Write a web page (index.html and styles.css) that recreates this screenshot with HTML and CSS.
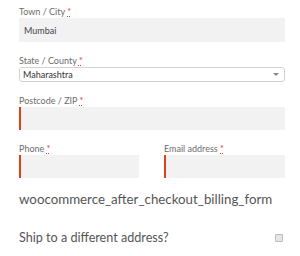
FILE: index.html
```html
<!DOCTYPE html>
<html lang="en">

<head>
    <meta charset="UTF-8">
    <meta name="viewport" content="width=device-width, initial-scale=1.0">
    <title>Billing Details</title>
    <link rel="stylesheet" href="styles.css">
</head>

<body>
    <form class="billing-form">
        <div class="form-row">
            <label for="city">Town / City <abbr class="required">*</abbr></label>
            <input type="text" id="city" value="Mumbai">
        </div>
        <div class="form-row">
            <label for="state">State / County <abbr class="required">*</abbr></label>
            <div class="select-box" id="state">
                <span>Maharashtra</span>
                <span class="arrow"></span>
            </div>
        </div>
        <div class="form-row">
            <label for="postcode">Postcode / ZIP <abbr class="required">*</abbr></label>
            <input type="text" id="postcode" class="invalid">
        </div>
        <div class="form-row half-row">
            <div class="half">
                <label for="phone">Phone <abbr class="required">*</abbr></label>
                <input type="text" id="phone" class="invalid">
            </div>
            <div class="half">
                <label for="email">Email address <abbr class="required">*</abbr></label>
                <input type="text" id="email" class="invalid">
            </div>
        </div>
        <p class="hook">woocommerce_after_checkout_billing_form</p>
        <div class="ship-row">
            <span>Ship to a different address?</span>
            <span class="checkbox"></span>
        </div>
    </form>
</body>

</html>
```

FILE: styles.css
```css
body {
    font-family: Lato, "Open Sans", sans-serif;
    margin: 0;
    padding: 5px 15px 0 19px;
    background-color: #fff;
    color: #515151;
}

.billing-form {
    display: flex;
    flex-direction: column;
    width: 266px;
}

.form-row {
    display: flex;
    flex-direction: column;
    margin-bottom: 12px;
}

.form-row label {
    display: block;
    font-size: 9px;
    line-height: 13px;
    color: #6d6d6d;
}

.required {
    color: #e2401c;
    text-decoration: underline dotted;
    border: none;
}

.form-row input {
    box-sizing: border-box;
    width: 100%;
    height: 24px;
    margin: 0;
    padding: 0 5px;
    font-family: inherit;
    font-size: 9px;
    color: #43454b;
    background-color: #f2f2f2;
    border: none;
    outline: none;
}

.form-row input.invalid {
    border-left: 2px solid #e2401c;
    height: 23px;
}

.select-box {
    box-sizing: border-box;
    height: 15px;
    display: flex;
    align-items: center;
    justify-content: space-between;
    padding: 0 5px 0 3px;
    font-size: 9px;
    color: #333;
    border: 1px solid #d2d2d2;
    border-radius: 3px;
    background-color: #fff;
}

.arrow {
    width: 0;
    height: 0;
    border-left: 3px solid transparent;
    border-right: 3px solid transparent;
    border-top: 3px solid #888;
}

.half-row {
    flex-direction: row;
    justify-content: space-between;
    margin-bottom: 11px;
}

.half {
    width: 120px;
    display: flex;
    flex-direction: column;
}

.half:last-child {
    width: 121px;
}

.hook {
    margin: 0;
    font-size: 13.3px;
    line-height: 20px;
    color: #555;
}

.ship-row {
    display: flex;
    justify-content: space-between;
    align-items: center;
    margin-top: 19px;
    font-size: 12.6px;
    line-height: 20px;
    color: #555;
}

.checkbox {
    width: 6px;
    height: 6px;
    margin-right: 2px;
    border: 1px solid #bbb;
    border-radius: 1px;
    background-color: #e6e6e6;
}
```
